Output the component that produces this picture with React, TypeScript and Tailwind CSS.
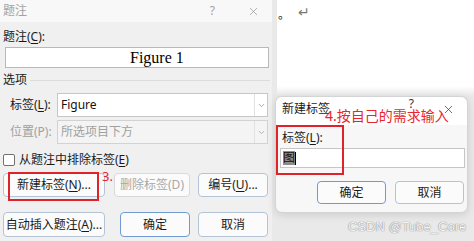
import React from "react";
import { ChevronDown, X } from "lucide-react";

const cjk = "font-['Noto_Sans','Noto_Sans_CJK_SC',sans-serif]";

const Btn: React.FC<{ w: string; children: React.ReactNode; tone?: "normal" | "default" | "disabled"; className?: string }> = ({
  w,
  children,
  tone = "normal",
  className = "",
}) => {
  const border =
    tone === "default" ? "border-[#6f9bd1]" : tone === "disabled" ? "border-[#d9d9d9]" : "border-[#b4c3d6]";
  const text = tone === "disabled" ? "text-[#a8a8a8]" : "text-[#1a1a1a]";
  return (
    <div
      className={`${w} h-full flex items-center justify-center rounded-[4px] border bg-[#fbfbfb] text-[12px] ${border} ${text} ${className}`}
    >
      {children}
    </div>
  );
};

const U: React.FC<{ children: React.ReactNode }> = ({ children }) => <span className="underline underline-offset-2">{children}</span>;

const CaptionDialog: React.FC = () => (
  <div className={`w-[272px] h-full shrink-0 bg-[#f0f0f0] flex flex-col ${cjk} relative`}>
    {/* Title bar */}
    <div className="h-[22px] bg-[#f8f8f8] flex items-center text-[12px] text-[#a3a3a3]">
      <span className="ml-[3px]">题注</span>
      <span className="ml-auto mr-[32px]">?</span>
      <X size={13} strokeWidth={1.2} className="mr-[12px] text-[#8a8a8a]" />
    </div>

    <div className="mt-[7px] h-[16px] leading-[16px] ml-[3px] text-[12px] text-[#1a1a1a]">
      题注(<U>C</U>):
    </div>
    <div className="mt-[2px] ml-[5px] w-[264px] h-[21px] bg-white border border-[#b8b8b8] flex items-center pl-[124px] font-['Liberation_Serif',serif] text-[16px] text-black">
      Figure 1
    </div>

    <div className="mt-[4px] h-[16px] ml-[3px] flex items-center text-[12px] text-[#1a1a1a]">
      <span>选项</span>
      <div className="ml-[3px] mr-[2px] flex-1 h-px bg-[#dcdcdc]" />
    </div>

    <div className="mt-[5px] h-[24px] flex items-center text-[12px]">
      <span className="ml-[10px] w-[47px] text-[#1a1a1a]">
        标签(<U>L</U>):
      </span>
      <div className="w-[211px] h-full bg-white border border-[#c6c6c6] flex items-center">
        <span className="ml-[3px] text-[#111]">Figure</span>
        <div className="ml-auto h-full w-[13px] border-l border-[#e2e2e2] flex items-center justify-center">
          <ChevronDown size={9} className="text-[#888]" />
        </div>
      </div>
    </div>

    <div className="mt-[3px] h-[24px] flex items-center text-[12px]">
      <span className="ml-[10px] w-[47px] text-[#a0a0a0]">位置(P):</span>
      <div className="w-[211px] h-full bg-[#f4f4f4] border border-[#d2d2d2] flex items-center">
        <span className="ml-[3px] text-[#a0a0a0]">所选项目下方</span>
        <div className="ml-auto h-full w-[13px] border-l border-[#e2e2e2] flex items-center justify-center">
          <ChevronDown size={9} className="text-[#999]" />
        </div>
      </div>
    </div>

    <div className="mt-[8px] h-[15px] flex items-center text-[12px] text-[#1a1a1a]">
      <div className="ml-[3px] w-[12px] h-[12px] border border-[#707070] bg-white rounded-[2px]" />
      <span className="ml-[4px]">
        从题注中排除标签(<U>E</U>)
      </span>
    </div>

    <div className="mt-[6px] h-[24px] flex">
      <Btn w="w-[102px]" className="ml-[3px]">
        新建标签(<U>N</U>)...
      </Btn>
      <Btn w="w-[76px]" tone="disabled" className="ml-[9px]">
        删除标签(D)
      </Btn>
      <Btn w="w-[70px]" className="ml-[8px]">
        编号(<U>U</U>)...
      </Btn>
    </div>

    <div className="mt-[15px] h-[25px] flex">
      <Btn w="w-[102px]" className="ml-[3px]">
        自动插入题注(<U>A</U>)...
      </Btn>
      <Btn w="w-[70px]" tone="default" className="ml-[15px]">
        确定
      </Btn>
      <Btn w="w-[70px]" className="ml-[8px]">
        取消
      </Btn>
    </div>

    {/* annotation 3 */}
    <div className="absolute left-[8px] top-[172px] w-[91px] h-[29px] border-2 border-[#e0222a]" />
    <span className="absolute left-[102px] top-[169px] text-[13px] leading-[14px] text-[#e0222a]">3.</span>
  </div>
);

const NewLabelDialog: React.FC = () => (
  <div className={`absolute left-[275px] top-[96px] w-[193px] h-[117px] rounded-[7px] bg-[#f7f7f7] border border-[#d4d4d4] shadow-[0_2px_8px_rgba(0,0,0,0.12)] flex flex-col ${cjk}`}>
    <div className="h-[28px] rounded-t-[7px] bg-white flex items-start text-[12px] text-[#1a1a1a]">
      <span className="ml-[6px] mt-[3px]">新建标签</span>
      <span className="ml-auto -mt-[2px] text-[#333]">?</span>
      <X size={13} strokeWidth={1.3} className="ml-[28px] mr-[12px] mt-[6px] text-[#333]" />
    </div>
    <div className="mt-[5px] ml-[6px] h-[16px] leading-[16px] text-[12px] text-[#1a1a1a]">
      标签(<U>L</U>):
    </div>
    <div className="mt-[2px] ml-[4px] w-[185px] h-[20px] bg-white border border-[#c6c6c6] flex items-center">
      <span className="ml-[2px] bg-[#8d8d8d] text-[#111] text-[12px] leading-[14px]">图</span>
      <span className="w-px h-[13px] bg-black" />
    </div>
    <div className="mt-[13px] h-[23px] flex">
      <Btn w="w-[69px]" tone="default" className="ml-[41px]">
        确定
      </Btn>
      <Btn w="w-[69px]" className="ml-[9px]">
        取消
      </Btn>
    </div>
  </div>
);

export default function App() {
  return (
    <div className="relative w-[474px] h-[241px] overflow-hidden flex bg-[#e9e9e9]">
      <CaptionDialog />

      {/* Document behind */}
      <div className="flex-1 flex flex-col">
        <div className="ml-[5px] h-[86px] bg-white relative">
          <span className={`absolute left-[1px] top-[6px] text-[12px] text-[#222] ${cjk}`}>。</span>
          <span className="absolute left-[21px] top-[2px] text-[14px] text-[#777] font-['DejaVu_Sans',sans-serif]">↵</span>
        </div>
        <div className="ml-[5px] h-[10px] bg-gradient-to-b from-white to-[#e9e9e9]" />
      </div>

      <NewLabelDialog />

      {/* annotation 4 */}
      <div className="absolute left-[276px] top-[125px] w-[68px] h-[50px] border-2 border-[#e0222a]" />
      <span className={`absolute left-[325px] top-[107px] text-[14px] leading-[18px] text-[#e8262b] ${cjk}`}>
        4.按自己的需求输入
      </span>

      {/* watermark */}
      <span className="absolute left-[348px] top-[219px] whitespace-nowrap text-[13px] leading-[16px] text-[#f4f4f4] font-['Liberation_Sans',sans-serif] [text-shadow:0_0_1px_#8a8a8a,0_0_1px_#8a8a8a]">
        CSDN @Tube_Core
      </span>
    </div>
  );
}
